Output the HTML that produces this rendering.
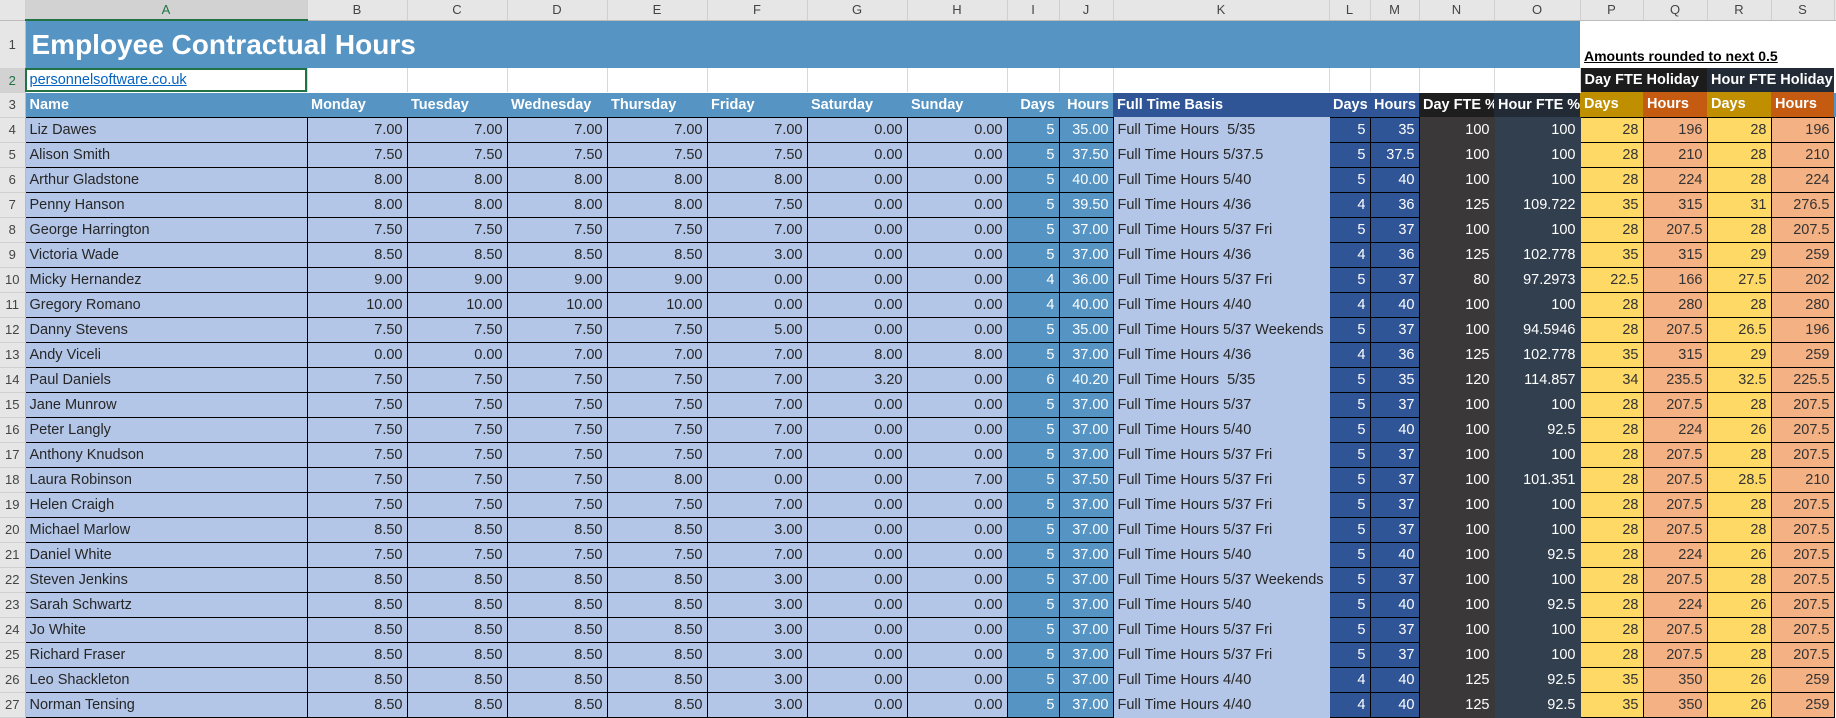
<!DOCTYPE html>
<html><head><meta charset="utf-8"><style>
body{margin:0;background:#fff;width:1836px;height:717px;overflow:hidden}
table{border-collapse:collapse;table-layout:fixed;width:1836px;font-family:"Liberation Sans",sans-serif;font-size:14.5px;color:#262626}
td{padding:0 4px;height:24px;white-space:nowrap;overflow:hidden;border:1px solid #000;text-align:right;background:#b4c6e7}
tr.ch td{height:19px;background:#e6e6e6;color:#444;text-align:center;font-size:13px;border:none;border-right:1px solid #cfcfcf;border-bottom:1px solid #bbb;padding:0}
td.rh,tr.r3 td.rh,tr.r2 td.rh{background:#e6e6e6;color:#444;text-align:center;font-size:13px;font-weight:normal;padding:0;border:none;border-bottom:1px solid #d0d0d0;border-right:1px solid #bbb}
tr.r1 td.t{height:47px;background:#5694c3;color:#fff;font-weight:bold;font-size:28px;text-align:left;border:none;padding-left:6px}
tr.r1 td.am{background:#fff;border:none;text-align:left;vertical-align:bottom;font-weight:bold;font-size:14px;color:#000;text-decoration:underline;padding-bottom:4px}
tr.r2 td{height:23px;background:#fff;border:none;border-right:1px solid #d8d8d8;border-bottom:1px solid #fff}
tr.r2 td.h1{background:#1c1c1c;color:#fff;font-weight:bold;text-align:left;border:none}
tr.r2 td.h2{background:#222a35;color:#fff;font-weight:bold;text-align:left;border:none}
tr.r3 td{background:#5694c3;color:#fff;font-weight:bold;text-align:left;border:none}
tr.r3 td.k{background:#2f5597}
tr.r3 td.n{background:#1e1e1e}
tr.r3 td.o{background:#222a35}
tr.r3 td.p{background:#bf8f00}
tr.r3 td.q{background:#c55a11}
td.a{text-align:left}
td.i{background:#5694c3;color:#fff}
td.k{text-align:left;border-color:#b4c6e7;border-left:1px solid #000}
td.l{background:#2f5597;color:#fff}
td.n{background:#3a3838;color:#fff;border-color:#3a3838}
td.o{background:#323f4f;color:#fff;border-color:#323f4f}
td.p{background:#ffd966;color:#333}
td.q{background:#f4b183;color:#333}
td.z{background:#fff;border:none;padding:0}
.sel{outline:2px solid #217346;outline-offset:-2px}
</style></head><body>
<table>
<colgroup><col style="width:25px"><col style="width:282px"><col style="width:100px"><col style="width:100px"><col style="width:100px"><col style="width:100px"><col style="width:100px"><col style="width:100px"><col style="width:100px"><col style="width:52px"><col style="width:54px"><col style="width:216px"><col style="width:41px"><col style="width:49px"><col style="width:75px"><col style="width:86px"><col style="width:63px"><col style="width:64px"><col style="width:64px"><col style="width:63px"><col style="width:2px"></colgroup>
<tr class="ch"><td></td><td style="background:#d2d2d2;color:#217346;border-bottom:2px solid #217346">A</td><td>B</td><td>C</td><td>D</td><td>E</td><td>F</td><td>G</td><td>H</td><td>I</td><td>J</td><td>K</td><td>L</td><td>M</td><td>N</td><td>O</td><td>P</td><td>Q</td><td>R</td><td>S</td><td></td></tr>
<tr class="r1"><td class="rh" style="height:47px">1</td><td class="t" colspan="15">Employee Contractual Hours</td><td class="am" colspan="4">Amounts rounded to next 0.5</td><td class="z"></td></tr>
<tr class="r2"><td class="rh" style="background:#d2d2d2;color:#217346">2</td><td class="sel" style="text-align:left;color:#0563c1;text-decoration:underline">personnelsoftware.co.uk</td><td></td><td></td><td></td><td></td><td></td><td></td><td></td><td></td><td></td><td></td><td></td><td></td><td></td><td></td><td class="h1" colspan="2">Day FTE Holiday</td><td class="h2" colspan="2">Hour FTE Holiday</td><td class="z"></td></tr>
<tr class="r3"><td class="rh">3</td><td>Name</td><td>Monday</td><td>Tuesday</td><td>Wednesday</td><td>Thursday</td><td>Friday</td><td>Saturday</td><td>Sunday</td><td style="text-align:right">Days</td><td style="text-align:right">Hours</td><td class="k">Full Time Basis</td><td class="k" style="text-align:right">Days</td><td class="k" style="text-align:right">Hours</td><td class="n">Day FTE %</td><td class="o">Hour FTE %</td><td class="p">Days</td><td class="q">Hours</td><td class="p">Days</td><td class="q">Hours</td><td class="z"></td></tr>
<tr><td class="rh">4</td><td class="a">Liz Dawes</td><td>7.00</td><td>7.00</td><td>7.00</td><td>7.00</td><td>7.00</td><td>0.00</td><td>0.00</td><td class="i">5</td><td class="i">35.00</td><td class="k">Full Time Hours&nbsp; 5/35</td><td class="l">5</td><td class="l">35</td><td class="n">100</td><td class="o">100</td><td class="p">28</td><td class="q">196</td><td class="p">28</td><td class="q">196</td><td class="z"></td></tr>
<tr><td class="rh">5</td><td class="a">Alison Smith</td><td>7.50</td><td>7.50</td><td>7.50</td><td>7.50</td><td>7.50</td><td>0.00</td><td>0.00</td><td class="i">5</td><td class="i">37.50</td><td class="k">Full Time Hours 5/37.5</td><td class="l">5</td><td class="l">37.5</td><td class="n">100</td><td class="o">100</td><td class="p">28</td><td class="q">210</td><td class="p">28</td><td class="q">210</td><td class="z"></td></tr>
<tr><td class="rh">6</td><td class="a">Arthur Gladstone</td><td>8.00</td><td>8.00</td><td>8.00</td><td>8.00</td><td>8.00</td><td>0.00</td><td>0.00</td><td class="i">5</td><td class="i">40.00</td><td class="k">Full Time Hours 5/40</td><td class="l">5</td><td class="l">40</td><td class="n">100</td><td class="o">100</td><td class="p">28</td><td class="q">224</td><td class="p">28</td><td class="q">224</td><td class="z"></td></tr>
<tr><td class="rh">7</td><td class="a">Penny Hanson</td><td>8.00</td><td>8.00</td><td>8.00</td><td>8.00</td><td>7.50</td><td>0.00</td><td>0.00</td><td class="i">5</td><td class="i">39.50</td><td class="k">Full Time Hours 4/36</td><td class="l">4</td><td class="l">36</td><td class="n">125</td><td class="o">109.722</td><td class="p">35</td><td class="q">315</td><td class="p">31</td><td class="q">276.5</td><td class="z"></td></tr>
<tr><td class="rh">8</td><td class="a">George Harrington</td><td>7.50</td><td>7.50</td><td>7.50</td><td>7.50</td><td>7.00</td><td>0.00</td><td>0.00</td><td class="i">5</td><td class="i">37.00</td><td class="k">Full Time Hours 5/37 Fri</td><td class="l">5</td><td class="l">37</td><td class="n">100</td><td class="o">100</td><td class="p">28</td><td class="q">207.5</td><td class="p">28</td><td class="q">207.5</td><td class="z"></td></tr>
<tr><td class="rh">9</td><td class="a">Victoria Wade</td><td>8.50</td><td>8.50</td><td>8.50</td><td>8.50</td><td>3.00</td><td>0.00</td><td>0.00</td><td class="i">5</td><td class="i">37.00</td><td class="k">Full Time Hours 4/36</td><td class="l">4</td><td class="l">36</td><td class="n">125</td><td class="o">102.778</td><td class="p">35</td><td class="q">315</td><td class="p">29</td><td class="q">259</td><td class="z"></td></tr>
<tr><td class="rh">10</td><td class="a">Micky Hernandez</td><td>9.00</td><td>9.00</td><td>9.00</td><td>9.00</td><td>0.00</td><td>0.00</td><td>0.00</td><td class="i">4</td><td class="i">36.00</td><td class="k">Full Time Hours 5/37 Fri</td><td class="l">5</td><td class="l">37</td><td class="n">80</td><td class="o">97.2973</td><td class="p">22.5</td><td class="q">166</td><td class="p">27.5</td><td class="q">202</td><td class="z"></td></tr>
<tr><td class="rh">11</td><td class="a">Gregory Romano</td><td>10.00</td><td>10.00</td><td>10.00</td><td>10.00</td><td>0.00</td><td>0.00</td><td>0.00</td><td class="i">4</td><td class="i">40.00</td><td class="k">Full Time Hours 4/40</td><td class="l">4</td><td class="l">40</td><td class="n">100</td><td class="o">100</td><td class="p">28</td><td class="q">280</td><td class="p">28</td><td class="q">280</td><td class="z"></td></tr>
<tr><td class="rh">12</td><td class="a">Danny Stevens</td><td>7.50</td><td>7.50</td><td>7.50</td><td>7.50</td><td>5.00</td><td>0.00</td><td>0.00</td><td class="i">5</td><td class="i">35.00</td><td class="k">Full Time Hours 5/37 Weekends</td><td class="l">5</td><td class="l">37</td><td class="n">100</td><td class="o">94.5946</td><td class="p">28</td><td class="q">207.5</td><td class="p">26.5</td><td class="q">196</td><td class="z"></td></tr>
<tr><td class="rh">13</td><td class="a">Andy Viceli</td><td>0.00</td><td>0.00</td><td>7.00</td><td>7.00</td><td>7.00</td><td>8.00</td><td>8.00</td><td class="i">5</td><td class="i">37.00</td><td class="k">Full Time Hours 4/36</td><td class="l">4</td><td class="l">36</td><td class="n">125</td><td class="o">102.778</td><td class="p">35</td><td class="q">315</td><td class="p">29</td><td class="q">259</td><td class="z"></td></tr>
<tr><td class="rh">14</td><td class="a">Paul Daniels</td><td>7.50</td><td>7.50</td><td>7.50</td><td>7.50</td><td>7.00</td><td>3.20</td><td>0.00</td><td class="i">6</td><td class="i">40.20</td><td class="k">Full Time Hours&nbsp; 5/35</td><td class="l">5</td><td class="l">35</td><td class="n">120</td><td class="o">114.857</td><td class="p">34</td><td class="q">235.5</td><td class="p">32.5</td><td class="q">225.5</td><td class="z"></td></tr>
<tr><td class="rh">15</td><td class="a">Jane Munrow</td><td>7.50</td><td>7.50</td><td>7.50</td><td>7.50</td><td>7.00</td><td>0.00</td><td>0.00</td><td class="i">5</td><td class="i">37.00</td><td class="k">Full Time Hours 5/37</td><td class="l">5</td><td class="l">37</td><td class="n">100</td><td class="o">100</td><td class="p">28</td><td class="q">207.5</td><td class="p">28</td><td class="q">207.5</td><td class="z"></td></tr>
<tr><td class="rh">16</td><td class="a">Peter Langly</td><td>7.50</td><td>7.50</td><td>7.50</td><td>7.50</td><td>7.00</td><td>0.00</td><td>0.00</td><td class="i">5</td><td class="i">37.00</td><td class="k">Full Time Hours 5/40</td><td class="l">5</td><td class="l">40</td><td class="n">100</td><td class="o">92.5</td><td class="p">28</td><td class="q">224</td><td class="p">26</td><td class="q">207.5</td><td class="z"></td></tr>
<tr><td class="rh">17</td><td class="a">Anthony Knudson</td><td>7.50</td><td>7.50</td><td>7.50</td><td>7.50</td><td>7.00</td><td>0.00</td><td>0.00</td><td class="i">5</td><td class="i">37.00</td><td class="k">Full Time Hours 5/37 Fri</td><td class="l">5</td><td class="l">37</td><td class="n">100</td><td class="o">100</td><td class="p">28</td><td class="q">207.5</td><td class="p">28</td><td class="q">207.5</td><td class="z"></td></tr>
<tr><td class="rh">18</td><td class="a">Laura Robinson</td><td>7.50</td><td>7.50</td><td>7.50</td><td>8.00</td><td>0.00</td><td>0.00</td><td>7.00</td><td class="i">5</td><td class="i">37.50</td><td class="k">Full Time Hours 5/37 Fri</td><td class="l">5</td><td class="l">37</td><td class="n">100</td><td class="o">101.351</td><td class="p">28</td><td class="q">207.5</td><td class="p">28.5</td><td class="q">210</td><td class="z"></td></tr>
<tr><td class="rh">19</td><td class="a">Helen Craigh</td><td>7.50</td><td>7.50</td><td>7.50</td><td>7.50</td><td>7.00</td><td>0.00</td><td>0.00</td><td class="i">5</td><td class="i">37.00</td><td class="k">Full Time Hours 5/37 Fri</td><td class="l">5</td><td class="l">37</td><td class="n">100</td><td class="o">100</td><td class="p">28</td><td class="q">207.5</td><td class="p">28</td><td class="q">207.5</td><td class="z"></td></tr>
<tr><td class="rh">20</td><td class="a">Michael Marlow</td><td>8.50</td><td>8.50</td><td>8.50</td><td>8.50</td><td>3.00</td><td>0.00</td><td>0.00</td><td class="i">5</td><td class="i">37.00</td><td class="k">Full Time Hours 5/37 Fri</td><td class="l">5</td><td class="l">37</td><td class="n">100</td><td class="o">100</td><td class="p">28</td><td class="q">207.5</td><td class="p">28</td><td class="q">207.5</td><td class="z"></td></tr>
<tr><td class="rh">21</td><td class="a">Daniel White</td><td>7.50</td><td>7.50</td><td>7.50</td><td>7.50</td><td>7.00</td><td>0.00</td><td>0.00</td><td class="i">5</td><td class="i">37.00</td><td class="k">Full Time Hours 5/40</td><td class="l">5</td><td class="l">40</td><td class="n">100</td><td class="o">92.5</td><td class="p">28</td><td class="q">224</td><td class="p">26</td><td class="q">207.5</td><td class="z"></td></tr>
<tr><td class="rh">22</td><td class="a">Steven Jenkins</td><td>8.50</td><td>8.50</td><td>8.50</td><td>8.50</td><td>3.00</td><td>0.00</td><td>0.00</td><td class="i">5</td><td class="i">37.00</td><td class="k">Full Time Hours 5/37 Weekends</td><td class="l">5</td><td class="l">37</td><td class="n">100</td><td class="o">100</td><td class="p">28</td><td class="q">207.5</td><td class="p">28</td><td class="q">207.5</td><td class="z"></td></tr>
<tr><td class="rh">23</td><td class="a">Sarah Schwartz</td><td>8.50</td><td>8.50</td><td>8.50</td><td>8.50</td><td>3.00</td><td>0.00</td><td>0.00</td><td class="i">5</td><td class="i">37.00</td><td class="k">Full Time Hours 5/40</td><td class="l">5</td><td class="l">40</td><td class="n">100</td><td class="o">92.5</td><td class="p">28</td><td class="q">224</td><td class="p">26</td><td class="q">207.5</td><td class="z"></td></tr>
<tr><td class="rh">24</td><td class="a">Jo White</td><td>8.50</td><td>8.50</td><td>8.50</td><td>8.50</td><td>3.00</td><td>0.00</td><td>0.00</td><td class="i">5</td><td class="i">37.00</td><td class="k">Full Time Hours 5/37 Fri</td><td class="l">5</td><td class="l">37</td><td class="n">100</td><td class="o">100</td><td class="p">28</td><td class="q">207.5</td><td class="p">28</td><td class="q">207.5</td><td class="z"></td></tr>
<tr><td class="rh">25</td><td class="a">Richard Fraser</td><td>8.50</td><td>8.50</td><td>8.50</td><td>8.50</td><td>3.00</td><td>0.00</td><td>0.00</td><td class="i">5</td><td class="i">37.00</td><td class="k">Full Time Hours 5/37 Fri</td><td class="l">5</td><td class="l">37</td><td class="n">100</td><td class="o">100</td><td class="p">28</td><td class="q">207.5</td><td class="p">28</td><td class="q">207.5</td><td class="z"></td></tr>
<tr><td class="rh">26</td><td class="a">Leo Shackleton</td><td>8.50</td><td>8.50</td><td>8.50</td><td>8.50</td><td>3.00</td><td>0.00</td><td>0.00</td><td class="i">5</td><td class="i">37.00</td><td class="k">Full Time Hours 4/40</td><td class="l">4</td><td class="l">40</td><td class="n">125</td><td class="o">92.5</td><td class="p">35</td><td class="q">350</td><td class="p">26</td><td class="q">259</td><td class="z"></td></tr>
<tr><td class="rh">27</td><td class="a">Norman Tensing</td><td>8.50</td><td>8.50</td><td>8.50</td><td>8.50</td><td>3.00</td><td>0.00</td><td>0.00</td><td class="i">5</td><td class="i">37.00</td><td class="k">Full Time Hours 4/40</td><td class="l">4</td><td class="l">40</td><td class="n">125</td><td class="o">92.5</td><td class="p">35</td><td class="q">350</td><td class="p">26</td><td class="q">259</td><td class="z"></td></tr>
</table>
</body></html>
